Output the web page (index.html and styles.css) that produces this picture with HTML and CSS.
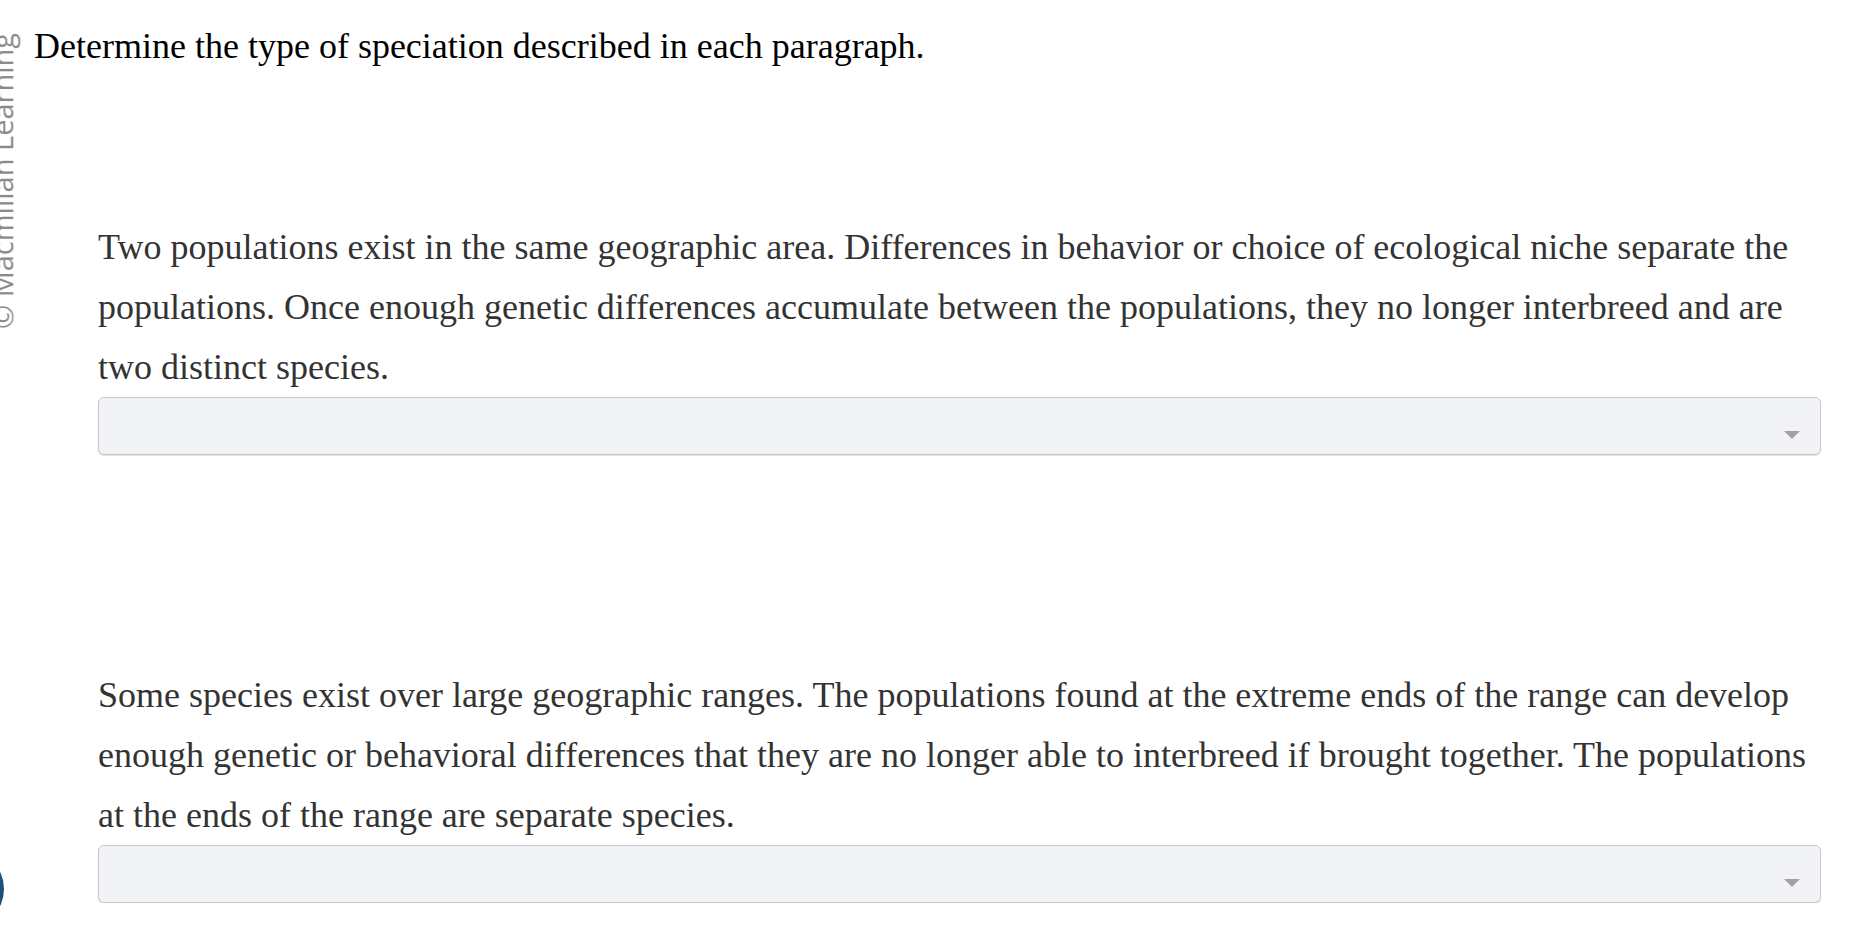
FILE: index.html
```html
<!DOCTYPE html>
<html lang="en">
<head>
<meta charset="utf-8">
<title>Speciation</title>
<link rel="stylesheet" href="styles.css">
</head>
<body>
<div class="watermark">© Macmillan Learning</div>
<div class="help-dot"></div>
<main class="page">
  <h1 class="prompt">Determine the type of speciation described in each paragraph.</h1>
  <section class="question">
    <p class="question-text">Two populations exist in the same geographic area. Differences in behavior or choice of ecological niche separate the populations. Once enough genetic differences accumulate between the populations, they no longer interbreed and are two distinct species.</p>
    <div class="select"><span class="select-arrow"></span></div>
  </section>
  <section class="question">
    <p class="question-text">Some species exist over large geographic ranges. The populations found at the extreme ends of the range can develop enough genetic or behavioral differences that they are no longer able to interbreed if brought together. The populations at the ends of the range are separate species.</p>
    <div class="select"><span class="select-arrow"></span></div>
  </section>
</main>
</body>
</html>
```

FILE: styles.css
```css
html, body {
  margin: 0;
  padding: 0;
  background: #ffffff;
}

body {
  font-family: "Liberation Serif", "Times New Roman", serif;
  font-size: 36px;
  color: #333333;
}

.page {
  padding: 16px 47px 0 34px;
}

.prompt {
  margin: 0;
  font-size: 36px;
  font-weight: normal;
  line-height: 60px;
  color: #000000;
}

.question {
  margin: 141px 0 0 64px;
}

.question + .question {
  margin-top: 210px;
}

.question-text {
  margin: 0;
  line-height: 60px;
  color: #333333;
}

.select {
  position: relative;
  height: 56px;
  border: 1px solid #c6c6c6;
  border-radius: 6px;
  background: #f2f3f7;
  box-shadow: 0 1px 1px rgba(0, 0, 0, 0.12);
}

.select-arrow {
  position: absolute;
  right: 20px;
  top: 33px;
  width: 0;
  height: 0;
  border-style: solid;
  border-width: 8px 8px 0 8px;
  border-color: #a3a3a3 transparent transparent transparent;
}

.watermark {
  position: fixed;
  left: 0;
  top: 0;
  transform-origin: top left;
  transform: translate(-12.7px, 329px) rotate(-90deg);
  white-space: nowrap;
  font-family: "Open Sans", sans-serif;
  font-size: 29px;
  line-height: 1;
  color: #8a8a8a;
}

.help-dot {
  position: fixed;
  left: -76px;
  top: 849px;
  width: 80px;
  height: 80px;
  border-radius: 50%;
  background: #1f4f7a;
}
```
